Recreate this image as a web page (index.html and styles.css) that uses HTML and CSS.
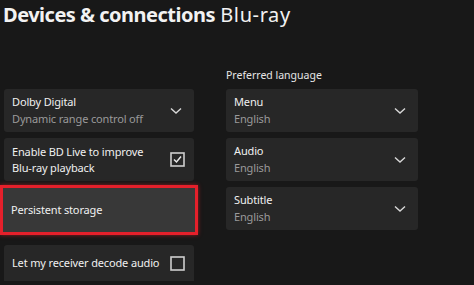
FILE: index.html
```html
<!DOCTYPE html>
<html lang="en">
<head>
    <meta charset="UTF-8">
    <title>Devices &amp; connections - Blu-ray</title>
<link rel="stylesheet" href="styles.css">
</head>
<body>
    <h1 class="title"><b>Devices &amp; connections</b> <span class="page">Blu-ray</span></h1>
    <div class="cols">
        <div class="col left">
            <div class="card">
                <div class="txt">
                    <div class="main">Dolby Digital</div>
                    <div class="sub">Dynamic range control off</div>
                </div>
                <svg class="chev" width="12" height="8" viewBox="0 0 12 8"><path d="M1 1.5 L6 6 L11 1.5" fill="none" stroke="#d8d8d8" stroke-width="1.4"/></svg>
            </div>
            <div class="card">
                <div class="txt">
                    <div class="main">Enable BD Live to improve</div>
                    <div class="main">Blu-ray playback</div>
                </div>
                <svg class="box" width="15" height="15" viewBox="0 0 15 15"><rect x="1" y="1" width="13" height="13" fill="none" stroke="#cfcfcf" stroke-width="1.6"/><path d="M4 7.5 L6.5 10 L11 4.5" fill="none" stroke="#e8e8e8" stroke-width="1.5"/></svg>
            </div>
            <div class="focus">
                <div class="card sel">
                    <div class="txt"><div class="main">Persistent storage</div></div>
                </div>
            </div>
            <div class="card last">
                <div class="txt"><div class="main">Let my receiver decode audio</div></div>
                <svg class="box" width="15" height="15" viewBox="0 0 15 15"><rect x="1" y="1" width="13" height="13" fill="none" stroke="#cfcfcf" stroke-width="1.6"/></svg>
            </div>
        </div>
        <div class="col right">
            <div class="label">Preferred language</div>
            <div class="card">
                <div class="txt">
                    <div class="main">Menu</div>
                    <div class="sub">English</div>
                </div>
                <svg class="chev" width="12" height="8" viewBox="0 0 12 8"><path d="M1 1.5 L6 6 L11 1.5" fill="none" stroke="#d8d8d8" stroke-width="1.4"/></svg>
            </div>
            <div class="card">
                <div class="txt">
                    <div class="main">Audio</div>
                    <div class="sub">English</div>
                </div>
                <svg class="chev" width="12" height="8" viewBox="0 0 12 8"><path d="M1 1.5 L6 6 L11 1.5" fill="none" stroke="#d8d8d8" stroke-width="1.4"/></svg>
            </div>
            <div class="card">
                <div class="txt">
                    <div class="main">Subtitle</div>
                    <div class="sub">English</div>
                </div>
                <svg class="chev" width="12" height="8" viewBox="0 0 12 8"><path d="M1 1.5 L6 6 L11 1.5" fill="none" stroke="#d8d8d8" stroke-width="1.4"/></svg>
            </div>
        </div>
    </div>
</body>
</html>
```
FILE: styles.css
```css
body{margin:0;background:#181818;color:#f0f0f0;font-family:"Noto Sans","Open Sans",sans-serif;width:474px;height:285px;overflow:hidden;}
.title{margin:0;padding:2px 0 0 3px;font-size:20px;font-weight:400;line-height:26px;color:#f2f2f2;}
.title b{font-weight:700;letter-spacing:-0.5px;}
.title .page{letter-spacing:0.6px;}
.cols{display:flex;gap:32px;padding:0 0 0 4px;}
.col{display:flex;flex-direction:column;gap:6px;}
.left{width:190px;padding-top:61px;}
.right{width:192px;padding-top:39px;}
.label{font-size:10.5px;color:#e6e6e6;line-height:16px;}
.card{background:#272727;border-radius:3px;height:43px;box-sizing:border-box;padding:0 10px 0 8px;display:flex;align-items:center;justify-content:space-between;}
.main{font-size:11px;line-height:16px;color:#f0f0f0;letter-spacing:-0.15px;}
.sub{font-size:11px;line-height:17px;color:#9a9a9a;letter-spacing:-0.15px;}
.chev{margin-right:2px;}
.box{margin-right:-1px;}
.focus{margin:-2px -4px 0 -4px;border:3px solid #e5202b;box-shadow:0 0 4px rgba(230,30,40,0.6);}
.sel{background:#383838;height:44px;border-radius:0;}
.last{margin-top:4px;height:36px;border-radius:3px 3px 0 0;}
```
